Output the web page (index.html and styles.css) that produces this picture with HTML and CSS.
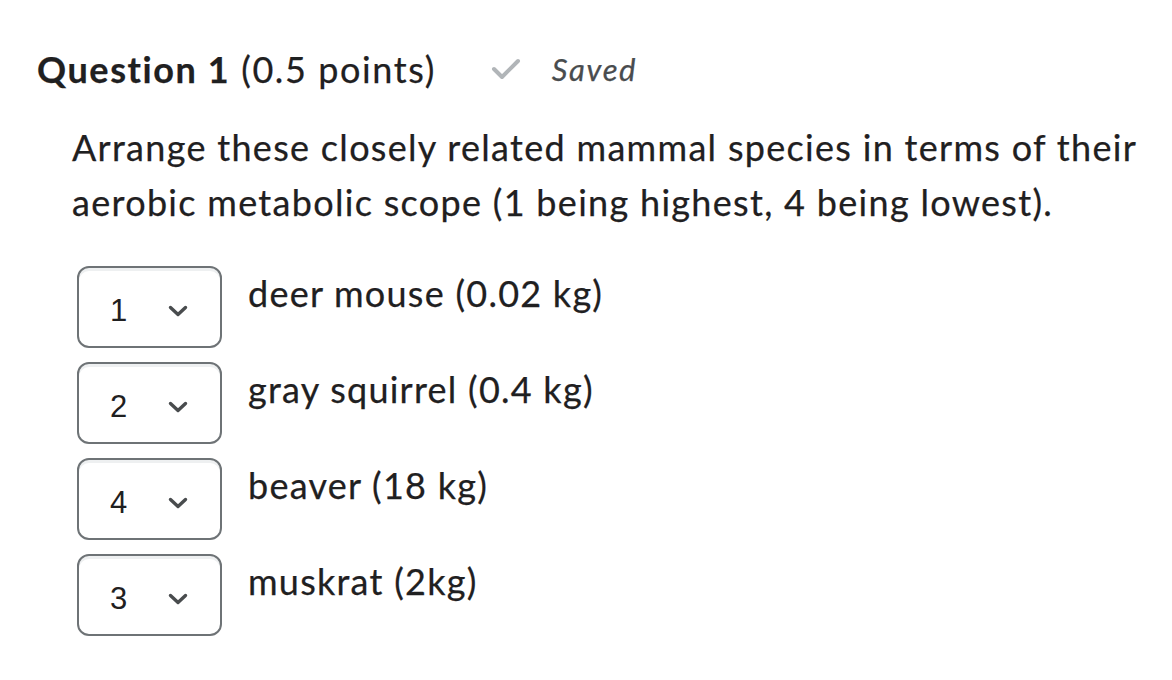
FILE: index.html
```html
<!DOCTYPE html>
<html>
<head>
<meta charset="utf-8">
<link rel="stylesheet" href="styles.css">
</head>
<body>
<div class="page">
  <div class="q-head">
    <h2 class="q-title"><strong>Question 1</strong> (0.5 points)</h2>
    <div class="saved">
      <svg class="check" width="30" height="22" viewBox="0 0 30 22"><path d="M3 11 L11 19 L27 3" fill="none" stroke="#b1b5b8" stroke-width="4" stroke-linecap="round" stroke-linejoin="round"/></svg>
      <span class="saved-text">Saved</span>
    </div>
  </div>
  <p class="q-text">Arrange these closely related mammal species in terms of their aerobic metabolic scope (1 being highest, 4 being lowest).</p>
  <div class="items">
    <div class="item">
      <div class="sel"><span class="num">1</span><svg class="chev" width="20" height="12" viewBox="0 0 20 12"><path d="M2.5 2.5 L10 9.5 L17.5 2.5" fill="none" stroke="#494c4e" stroke-width="3.4" stroke-linecap="round" stroke-linejoin="round"/></svg></div>
      <div class="label">deer mouse (0.02 kg)</div>
    </div>
    <div class="item">
      <div class="sel"><span class="num">2</span><svg class="chev" width="20" height="12" viewBox="0 0 20 12"><path d="M2.5 2.5 L10 9.5 L17.5 2.5" fill="none" stroke="#494c4e" stroke-width="3.4" stroke-linecap="round" stroke-linejoin="round"/></svg></div>
      <div class="label">gray squirrel (0.4 kg)</div>
    </div>
    <div class="item">
      <div class="sel"><span class="num">4</span><svg class="chev" width="20" height="12" viewBox="0 0 20 12"><path d="M2.5 2.5 L10 9.5 L17.5 2.5" fill="none" stroke="#494c4e" stroke-width="3.4" stroke-linecap="round" stroke-linejoin="round"/></svg></div>
      <div class="label">beaver (18 kg)</div>
    </div>
    <div class="item">
      <div class="sel"><span class="num">3</span><svg class="chev" width="20" height="12" viewBox="0 0 20 12"><path d="M2.5 2.5 L10 9.5 L17.5 2.5" fill="none" stroke="#494c4e" stroke-width="3.4" stroke-linecap="round" stroke-linejoin="round"/></svg></div>
      <div class="label">muskrat (2kg)</div>
    </div>
  </div>
</div>
</body>
</html>
```
FILE: styles.css
```css
html, body {
  margin: 0;
  padding: 0;
  background: #ffffff;
}
body {
  font-family: Lato, "Open Sans", sans-serif;
  color: #1f2021;
  -webkit-text-stroke: 0.25px currentColor;
}
.page {
  padding: 43px 0 0 37px;
}
.q-head {
  display: flex;
  align-items: center;
  height: 52px;
}
.q-title {
  margin: 0;
  font-size: 36px;
  font-weight: 400;
  line-height: 52px;
  letter-spacing: 1.6px;
  white-space: nowrap;
}
.q-title strong {
  font-weight: 700;
}
.saved {
  display: flex;
  align-items: center;
  margin-left: 55px;
  color: #494c4e;
}
.check {
  display: block;
}
.saved-text {
  margin-left: 31px;
  font-style: italic;
  font-size: 31px;
  letter-spacing: 1.6px;
}
.q-text {
  margin: 25px 0 0 35px;
  font-size: 36px;
  line-height: 55px;
  letter-spacing: 1.3px;
  width: 1090px;
}
.items {
  margin: 36px 0 0 40px;
  display: flex;
  flex-direction: column;
  gap: 14px;
}
.item {
  display: flex;
  align-items: flex-start;
}
.sel {
  box-sizing: border-box;
  width: 145px;
  height: 82px;
  border: 2px solid #6e7376;
  border-radius: 12px;
  box-shadow: inset 0 3px 0 0 #eef0f1;
  display: flex;
  align-items: center;
  padding: 8px 0 0 31px;
}
.num {
  font-family: "Liberation Sans", Arial, sans-serif;
  font-size: 31px;
  width: 58px;
  -webkit-text-stroke: 0;
}
.chev {
  display: block;
}
.label {
  margin-left: 26px;
  font-size: 36px;
  line-height: 54px;
  letter-spacing: 1.25px;
  white-space: nowrap;
}
```
